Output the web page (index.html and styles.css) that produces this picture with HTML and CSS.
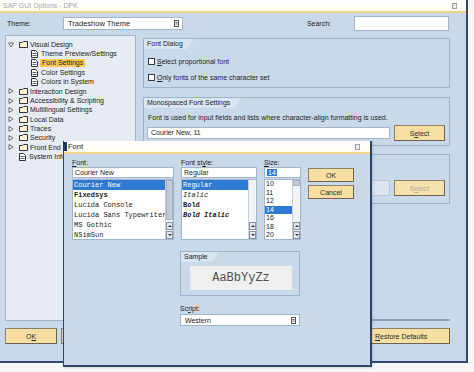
FILE: index.html
```html
<!DOCTYPE html>
<html lang="en">
<head>
<meta charset="UTF-8">
<title>SAP GUI Options - DPK</title>
<link rel="stylesheet" href="styles.css">
</head>
<body>
    <div class="window">
        <div class="titlebar">
            <span class="title">SAP GUI Options - DPK</span>
            <span class="tb-icon"></span>
        </div>

        <div class="theme-row">
            <span class="theme-lbl">Theme:</span>
            <div class="dropdown theme-dd">
                <span>Tradeshow Theme</span>
                <svg class="dd-icon" width="5" height="7" viewBox="0 0 5 7"><rect x="0.5" y="0.5" width="4" height="6" fill="#fff" stroke="#555"/><path d="M1.5 2.5h2M1.5 4h2" stroke="#555"/></svg>
            </div>
            <span class="search-lbl">Search:</span>
            <div class="field search-in"></div>
        </div>

        <div class="content">
            <ul class="tree">
                <li class="node"><svg class="tri" width="6" height="6" viewBox="0 0 6 6"><polygon points="0.5,1 5.5,1 3,5" fill="#fff" stroke="#666"/></svg><svg class="folder" width="9" height="7" viewBox="0 0 9 7"><path d="M0.5 1.5h3l1-1h4v6h-8z" fill="#fbf3d8" stroke="#333"/></svg>Visual Design</li>
                <li class="leaf"><svg class="doc" width="7" height="8" viewBox="0 0 7 8"><path d="M0.5 0.5h4l2 2v5h-6z" fill="#fff" stroke="#333"/><path d="M1.5 3.5h4M1.5 5.5h4" stroke="#666"/></svg>Theme Preview/Settings</li>
                <li class="leaf"><svg class="doc" width="7" height="8" viewBox="0 0 7 8"><path d="M0.5 0.5h4l2 2v5h-6z" fill="#fff" stroke="#333"/><path d="M1.5 3.5h4M1.5 5.5h4" stroke="#666"/></svg><span class="current">Font Settings</span></li>
                <li class="leaf"><svg class="doc" width="7" height="8" viewBox="0 0 7 8"><path d="M0.5 0.5h4l2 2v5h-6z" fill="#fff" stroke="#333"/><path d="M1.5 3.5h4M1.5 5.5h4" stroke="#666"/></svg>Color Settings</li>
                <li class="leaf"><svg class="doc" width="7" height="8" viewBox="0 0 7 8"><path d="M0.5 0.5h4l2 2v5h-6z" fill="#fff" stroke="#333"/><path d="M1.5 3.5h4M1.5 5.5h4" stroke="#666"/></svg>Colors in System</li>
                <li class="node"><svg class="tri" width="6" height="6" viewBox="0 0 6 6"><polygon points="1,0.5 5,3 1,5.5" fill="#fff" stroke="#666"/></svg><svg class="folder" width="9" height="7" viewBox="0 0 9 7"><path d="M0.5 1.5h3l1-1h4v6h-8z" fill="#fbf3d8" stroke="#333"/></svg>Interaction Design</li>
                <li class="node"><svg class="tri" width="6" height="6" viewBox="0 0 6 6"><polygon points="1,0.5 5,3 1,5.5" fill="#fff" stroke="#666"/></svg><svg class="folder" width="9" height="7" viewBox="0 0 9 7"><path d="M0.5 1.5h3l1-1h4v6h-8z" fill="#fbf3d8" stroke="#333"/></svg>Accessibility &amp; Scripting</li>
                <li class="node"><svg class="tri" width="6" height="6" viewBox="0 0 6 6"><polygon points="1,0.5 5,3 1,5.5" fill="#fff" stroke="#666"/></svg><svg class="folder" width="9" height="7" viewBox="0 0 9 7"><path d="M0.5 1.5h3l1-1h4v6h-8z" fill="#fbf3d8" stroke="#333"/></svg>Multilingual Settings</li>
                <li class="node"><svg class="tri" width="6" height="6" viewBox="0 0 6 6"><polygon points="1,0.5 5,3 1,5.5" fill="#fff" stroke="#666"/></svg><svg class="folder" width="9" height="7" viewBox="0 0 9 7"><path d="M0.5 1.5h3l1-1h4v6h-8z" fill="#fbf3d8" stroke="#333"/></svg>Local Data</li>
                <li class="node"><svg class="tri" width="6" height="6" viewBox="0 0 6 6"><polygon points="1,0.5 5,3 1,5.5" fill="#fff" stroke="#666"/></svg><svg class="folder" width="9" height="7" viewBox="0 0 9 7"><path d="M0.5 1.5h3l1-1h4v6h-8z" fill="#fbf3d8" stroke="#333"/></svg>Traces</li>
                <li class="node"><svg class="tri" width="6" height="6" viewBox="0 0 6 6"><polygon points="1,0.5 5,3 1,5.5" fill="#fff" stroke="#666"/></svg><svg class="folder" width="9" height="7" viewBox="0 0 9 7"><path d="M0.5 1.5h3l1-1h4v6h-8z" fill="#fbf3d8" stroke="#333"/></svg>Security</li>
                <li class="node"><svg class="tri" width="6" height="6" viewBox="0 0 6 6"><polygon points="1,0.5 5,3 1,5.5" fill="#fff" stroke="#666"/></svg><svg class="folder" width="9" height="7" viewBox="0 0 9 7"><path d="M0.5 1.5h3l1-1h4v6h-8z" fill="#fbf3d8" stroke="#333"/></svg><span class="clipped">Front End Printing</span></li>
                <li class="node"><span class="tri-space"></span><svg class="doc" width="7" height="8" viewBox="0 0 7 8"><path d="M0.5 0.5h4l2 2v5h-6z" fill="#fff" stroke="#333"/><path d="M1.5 3.5h4M1.5 5.5h4" stroke="#666"/></svg><span class="clipped">System Information</span></li>
            </ul>

            <div class="settings">
                <div class="group group-font">
                    <div class="group-tab">Font Dialog</div>
                    <div class="check-row"><span class="checkbox"></span><span><u>S</u>elect proportional font</span></div>
                    <div class="check-row"><span class="checkbox"></span><span><u>O</u>nly fonts of the same character set</span></div>
                </div>
                <div class="group group-mono">
                    <div class="group-tab">Monospaced Font Settings</div>
                    <div class="group-note">Font is used for input fields and lists where character-align formatting is used.</div>
                    <div class="pick-row">
                        <div class="field pick-field">Courier New, 11</div>
                        <button class="btn pick-btn">S<u>e</u>lect</button>
                    </div>
                </div>
                <div class="group group-prop">
                    <div class="pick-row">
                        <div class="field pick-field disabled"></div>
                        <button class="btn pick-btn disabled">S<u>e</u>lect</button>
                    </div>
                </div>
            </div>
        </div>

        <div class="footer">
            <button class="btn ok-btn">O<u>K</u></button>
            <button class="btn apply-btn"></button>
            <button class="btn restore-btn"><u>R</u>estore Defaults</button>
        </div>
    </div>

    <div class="font-dialog">
        <div class="fd-title">
            <span>Font</span>
            <span class="tb-icon"></span>
        </div>
        <div class="fd-body">
            <div class="fd-top">
                <div class="fd-col col-font">
                    <div class="fd-lbl"><u>F</u>ont:</div>
                    <div class="fd-input">Courier New</div>
                    <div class="fd-list">
                        <ul class="items mono">
                            <li class="sel">Courier New</li>
                            <li class="bold">Fixedsys</li>
                            <li>Lucida Console</li>
                            <li>Lucida Sans Typewriter</li>
                            <li>MS Gothic</li>
                            <li>NSimSun</li>
                        </ul>
                        <div class="scroll"><span class="thumb tall"></span><span class="arrow up"></span><span class="arrow down"></span></div>
                    </div>
                </div>
                <div class="fd-col col-style">
                    <div class="fd-lbl">Font st<u>y</u>le:</div>
                    <div class="fd-input">Regular</div>
                    <div class="fd-list">
                        <ul class="items mono">
                            <li class="sel">Regular</li>
                            <li class="italic">Italic</li>
                            <li class="bold">Bold</li>
                            <li class="bold italic">Bold Italic</li>
                        </ul>
                        <div class="scroll"><span class="arrow up"></span><span class="arrow down"></span></div>
                    </div>
                </div>
                <div class="fd-col col-size">
                    <div class="fd-lbl"><u>S</u>ize:</div>
                    <div class="fd-input"><span class="hl">14</span></div>
                    <div class="fd-list">
                        <ul class="items sizes">
                            <li>10</li>
                            <li>11</li>
                            <li>12</li>
                            <li class="sel">14</li>
                            <li>16</li>
                            <li>18</li>
                            <li>20</li>
                        </ul>
                        <div class="scroll"><span class="thumb short"></span><span class="arrow up"></span><span class="arrow down"></span></div>
                    </div>
                </div>
                <div class="fd-buttons">
                    <button class="btn">OK</button>
                    <button class="btn">Cancel</button>
                </div>
            </div>

            <div class="fd-bottom">
                <div class="group sample-group">
                    <div class="group-tab">Sample</div>
                    <div class="sample-box">AaBbYyZz</div>
                </div>
                <div class="fd-lbl script-lbl">Sc<u>r</u>ipt:</div>
                <div class="dropdown script-dd">
                    <span>Western</span>
                    <svg class="dd-icon" width="5" height="7" viewBox="0 0 5 7"><rect x="0.5" y="0.5" width="4" height="6" fill="#fff" stroke="#555"/><path d="M1.5 2.5h2M1.5 4h2" stroke="#555"/></svg>
                </div>
            </div>
        </div>
    </div>
</body>
</html>
```

FILE: styles.css
```css
* {
    box-sizing: border-box;
}

body {
    margin: 0;
    width: 474px;
    height: 372px;
    position: relative;
    overflow: hidden;
    background-color: #f6f7f9;
    font-family: "Liberation Sans", Arial, sans-serif;
    font-size: 7px;
    color: #1d1d1d;
}

u {
    text-decoration-thickness: 1px;
    text-underline-offset: 1px;
}

/* main window */
.window {
    width: 468px;
    height: 363px;
    background-color: #c9d9ea;
    border-right: 2px solid #34496a;
    border-bottom: 2px solid #34496a;
}

.titlebar {
    height: 13px;
    display: flex;
    align-items: center;
    justify-content: space-between;
    padding: 0 9px 0 3px;
    background: linear-gradient(#ffffff, #fffcf1);
    border-bottom: 2px solid #efd48b;
    color: #9ea7b1;
}

.tb-icon {
    width: 5px;
    height: 6px;
    border: 1px solid #9aa3ad;
    background-color: #eceff2;
}

.theme-row {
    display: flex;
    align-items: center;
    height: 15px;
    margin-top: 3px;
    padding-left: 7px;
}

.theme-lbl {
    width: 56px;
}

.dropdown {
    height: 13px;
    display: flex;
    align-items: center;
    justify-content: space-between;
    padding: 0 3px 0 4px;
    background-color: #fff;
    border: 1px solid #a5b6c9;
}

.theme-dd {
    width: 120px;
    font-size: 7.5px;
}

.search-lbl {
    margin-left: auto;
    margin-right: 23px;
}

.field {
    background-color: #fff;
    border: 1px solid #a5b6c9;
}

.search-in {
    width: 95px;
    height: 15px;
    margin-right: 17px;
}

.content {
    display: flex;
    height: 286px;
    margin-top: 4px;
}

/* navigation tree */
.tree {
    list-style: none;
    margin: 0 0 0 5px;
    padding: 4px 0 0 0;
    width: 131px;
    background-color: #e7ecf2;
    border: 1px solid #a3b3c5;
}

.tree li {
    display: flex;
    align-items: center;
    height: 9.33px;
    white-space: nowrap;
}

.tree .node {
    padding-left: 2px;
}

.tree .leaf {
    padding-left: 25px;
}

.tri, .tri-space {
    width: 6px;
    margin-right: 5px;
}

.folder {
    margin-right: 2px;
}

.doc {
    margin-right: 3px;
}

.tree .current {
    background-color: #f7c95b;
    padding: 0 2px;
    line-height: 8px;
    margin-left: -1px;
}

/* the dialog hides the rest of these labels */
.tree .clipped {
    max-width: 34px;
    overflow: hidden;
}

/* settings column */
.settings {
    margin-left: 7px;
    width: 307px;
    padding-top: 3px;
    border-bottom: 2px solid #8ea2b9;
}

.group {
    border: 1px solid #9fb2c7;
}

.group-tab {
    width: fit-content;
    height: 10px;
    line-height: 10px;
    padding: 0 11px 0 3px;
    background-color: #d9e5f1;
    clip-path: polygon(0 0, 100% 0, calc(100% - 7px) 100%, 0 100%);
}

.group-font {
    height: 50px;
}

.group-mono {
    height: 49px;
    margin-top: 9px;
}

.group-prop {
    height: 50px;
    margin-top: 8px;
}

.check-row {
    display: flex;
    align-items: center;
    height: 8px;
    padding-left: 4px;
    margin-top: 8px;
}

.check-row:first-of-type {
    margin-top: 9px;
}

.checkbox {
    width: 7px;
    height: 7px;
    margin-right: 2px;
    background-color: #fff;
    border: 1px solid #3b3b3b;
}

.group-note {
    margin-top: 6px;
    padding-left: 4px;
}

.pick-row {
    display: flex;
    align-items: center;
    padding-left: 3px;
    margin-top: 4px;
}

.group-prop .pick-row {
    margin-top: 25px;
}

.pick-field {
    width: 243px;
    height: 12px;
    line-height: 10px;
    padding-left: 3px;
}

.pick-field.disabled {
    height: 16px;
    background-color: #dce5ef;
    border-color: #b7c6d6;
}

.btn {
    height: 16px;
    padding: 0;
    font-family: "Liberation Sans", Arial, sans-serif;
    font-size: 7px;
    color: #2a2a2a;
    background-color: #f6dfa3;
    border: 1px solid #8e816a;
    border-right-color: #6d6350;
    border-bottom-color: #6d6350;
}

.pick-btn {
    width: 51px;
    margin-left: 4px;
}

.btn.disabled {
    color: #b5aa90;
    background-color: #f3e1ae;
}

/* footer buttons */
.footer {
    display: flex;
    padding: 7px 16px 0 5px;
}

.ok-btn {
    width: 52px;
}

.apply-btn {
    width: 52px;
    margin-left: 4px;
    background-color: #d3d8de;
}

.restore-btn {
    width: 79px;
    margin-left: auto;
    text-align: left;
    padding-left: 3px;
}

/* font dialog */
.font-dialog {
    position: absolute;
    left: 63px;
    top: 141px;
    width: 309px;
    height: 226px;
    background-color: #c9d9ea;
    border-left: 1px solid #2d4566;
    border-right: 2px solid #2d4566;
    border-bottom: 2px solid #2d4566;
    box-shadow: 1px 1px 2px rgba(0, 0, 0, 0.15);
}

.fd-title {
    position: relative;
    height: 13px;
    display: flex;
    align-items: center;
    justify-content: space-between;
    padding: 0 10px 0 4px;
    background: linear-gradient(#ffffff, #fffbef);
    border-bottom: 2px solid #efd48b;
    font-size: 7.5px;
}

.fd-title::before {
    content: "";
    position: absolute;
    left: -1px;
    top: 1px;
    width: 4px;
    height: 9px;
    background-color: #1f3a5e;
}

.fd-body {
    padding: 4px 0 0 8px;
}

.fd-top {
    display: flex;
    gap: 7px;
}

.fd-col {
    display: flex;
    flex-direction: column;
}

.col-font {
    width: 102px;
}

.col-style {
    width: 76px;
}

.col-size {
    width: 37px;
}

.fd-lbl {
    height: 9px;
    line-height: 9px;
}

.fd-input {
    height: 11px;
    line-height: 10px;
    padding-left: 2px;
    background-color: #fff;
    border: 1px solid #a5b6c9;
}

.fd-input .hl {
    background-color: #2f7bd4;
    color: #fff;
    padding: 0 1px;
}

.fd-list {
    display: flex;
    height: 61px;
    margin-top: 1px;
    background-color: #fff;
    border: 1px solid #a5b6c9;
}

.items {
    list-style: none;
    margin: 0;
    padding: 0;
    flex: 1;
    overflow: hidden;
}

.items li {
    white-space: nowrap;
    padding-left: 1px;
}

.items.mono li {
    height: 10px;
    line-height: 10px;
    font-family: "Liberation Mono", "Courier New", monospace;
    font-size: 7px;
}

.items.sizes li {
    height: 8.5px;
    line-height: 8.5px;
}

.items li.sel {
    background-color: #2f7bd4;
    color: #fff;
}

.items li.bold {
    font-weight: bold;
}

.items li.italic {
    font-style: italic;
}

.scroll {
    width: 8px;
    display: flex;
    flex-direction: column;
    border-left: 1px solid #c7d0da;
    background-color: #f1f3f5;
}

.thumb {
    background-color: #c3cbd4;
    border: 1px solid #a8b3bf;
}

.thumb.tall {
    height: 40px;
}

.thumb.short {
    height: 6px;
}

.arrow {
    height: 8px;
    margin-top: 1px;
    background-color: #e4e8ec;
    border: 1px solid #8a939d;
    position: relative;
}

.arrow.up {
    margin-top: auto;
}

.arrow::after {
    content: "";
    position: absolute;
    left: 1px;
    top: 2px;
    border-left: 2px solid transparent;
    border-right: 2px solid transparent;
}

.arrow.up::after {
    border-bottom: 2px solid #333;
}

.arrow.down::after {
    border-top: 2px solid #333;
}

.fd-buttons {
    display: flex;
    flex-direction: column;
    gap: 3px;
    padding-top: 10px;
}

.fd-buttons .btn {
    width: 46px;
    height: 14px;
}

.fd-bottom {
    width: 120px;
    margin-left: 108px;
    padding-top: 11px;
}

.sample-group {
    height: 45px;
}

.sample-box {
    margin: 4px 7px 0 9px;
    height: 24px;
    line-height: 24px;
    text-align: center;
    background-color: #efefef;
    font-family: "Liberation Mono", "Courier New", monospace;
    font-size: 12px;
    color: #505050;
}

.script-lbl {
    margin-top: 8px;
}

.script-dd {
    height: 12px;
    margin-top: 1px;
}
```
